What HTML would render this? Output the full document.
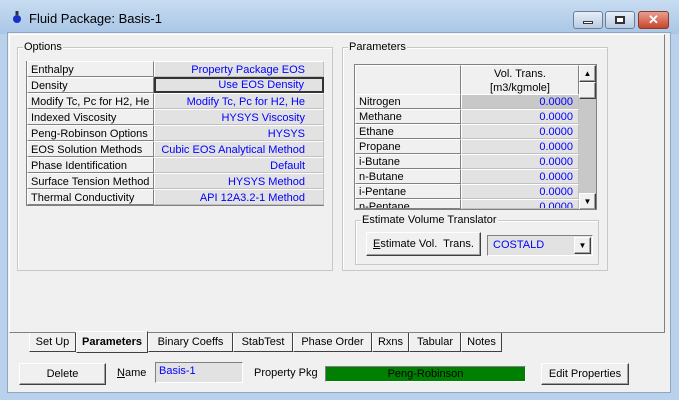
<!DOCTYPE html><html><head><style>
*{box-sizing:border-box;margin:0;padding:0}
body{width:679px;height:400px;position:relative;overflow:hidden;font-family:"Liberation Sans",sans-serif;font-size:11px;background:#b9d1ea}
.a{position:absolute}
.title{left:0;top:0;width:679px;height:34px;background:linear-gradient(#c7dcf1,#a9c6e6)}
.frame{left:7px;top:32px;width:664px;height:361px;background:#f0f0f0;border:1px solid #8ea6c4}
.grp{border:1px solid #c8c8c8;box-shadow:inset 1px 1px 0 #fff}
.lbl{background:#f0f0f0;padding:0 1px;color:#000}
.cell{position:absolute;height:16px;line-height:16px;border:1px solid #a0a0a0;padding:0 3px;white-space:nowrap;overflow:hidden}
.nm{background:#f0f0f0;border-color:#fff #808080 #808080 #fff}
.vl{background:#e2e2e2;color:#0000ff;text-align:right;padding-right:18px;border-color:#fff #c0c0c0 #c0c0c0 #fff}
.btn{position:absolute;background:#f0f0f0;border:1px solid;border-color:#fff #404040 #404040 #fff;box-shadow:inset -1px -1px 0 #a0a0a0;text-align:center}
.tab{position:absolute;top:333px;height:19px;background:#f0f0f0;border:1px solid;border-color:#fff #404040 #404040 #fff;border-top:none;text-align:center;line-height:18px}
.wb{position:absolute;top:11px;width:30px;height:18px;border:1px solid #6d7f97;border-radius:3px;background:linear-gradient(#e6eef8,#b9cbe3)}
</style></head><body>
<div class="a title"></div>
<div class="a" style="left:12px;top:10px;width:10px;height:12px"><svg width="10" height="13"><circle cx="5" cy="9" r="4" fill="#1a2fc8"/><rect x="3.5" y="1" width="3" height="4" fill="#333"/></svg></div>
<div class="a" style="left:29px;top:11px;font-size:13px">Fluid Package: Basis-1</div>
<div class="wb" style="left:573px"><div class="a" style="left:9px;top:9px;width:10px;height:3px;background:#fff;border:1px solid #333"></div></div>
<div class="wb" style="left:605px"><div class="a" style="left:9px;top:4px;width:10px;height:8px;border:2px solid #333;background:#fff"></div></div>
<div class="wb" style="left:638px;width:31px;border-color:#8a3a2a;background:linear-gradient(#e8a090,#c8442e);color:#fff;text-align:center;font-weight:bold;font-size:13px;line-height:15px">✕</div>
<div class="a frame"></div>
<div class="a" style="left:9px;top:34px;width:656px;height:299px;border:1px solid;border-color:#fff #808080 #808080 #fff"></div>
<div class="a grp" style="left:17px;top:47px;width:316px;height:224px"></div>
<div class="a lbl" style="left:23px;top:41px">Options</div>
<div class="a" style="left:26px;top:61px;width:298px;height:145px;border:1px solid #808080;background:#f0f0f0"></div>
<div class="cell nm" style="left:27px;top:61px;width:127px">Enthalpy</div><div class="cell vl" style="left:154px;top:61px;width:170px">Property Package EOS</div>
<div class="cell nm" style="left:27px;top:77px;width:127px">Density</div><div class="cell vl" style="left:154px;top:77px;width:170px;border:2px solid #333;line-height:13px">Use EOS Density</div>
<div class="cell nm" style="left:27px;top:93px;width:127px">Modify Tc, Pc for H2, He</div><div class="cell vl" style="left:154px;top:93px;width:170px">Modify Tc, Pc for H2, He</div>
<div class="cell nm" style="left:27px;top:109px;width:127px">Indexed Viscosity</div><div class="cell vl" style="left:154px;top:109px;width:170px">HYSYS Viscosity</div>
<div class="cell nm" style="left:27px;top:125px;width:127px">Peng-Robinson Options</div><div class="cell vl" style="left:154px;top:125px;width:170px">HYSYS</div>
<div class="cell nm" style="left:27px;top:141px;width:127px">EOS Solution Methods</div><div class="cell vl" style="left:154px;top:141px;width:170px">Cubic EOS Analytical Method</div>
<div class="cell nm" style="left:27px;top:157px;width:127px">Phase Identification</div><div class="cell vl" style="left:154px;top:157px;width:170px">Default</div>
<div class="cell nm" style="left:27px;top:173px;width:127px">Surface Tension Method</div><div class="cell vl" style="left:154px;top:173px;width:170px">HYSYS Method</div>
<div class="cell nm" style="left:27px;top:189px;width:127px">Thermal Conductivity</div><div class="cell vl" style="left:154px;top:189px;width:170px">API 12A3.2-1 Method</div>
<div class="a grp" style="left:342px;top:47px;width:266px;height:224px"></div>
<div class="a lbl" style="left:348px;top:41px">Parameters</div>
<div class="a" style="left:354px;top:64px;width:243px;height:146px;border:1px solid #808080;background:#f0f0f0;overflow:hidden">
<div class="cell nm" style="left:0;top:0;width:106px;height:30px"></div>
<div class="cell nm" style="left:106px;top:0;width:118px;height:30px;text-align:center;line-height:14px;padding-top:1px">Vol. Trans.<br>[m3/kgmole]</div>
<div class="a" style="left:224px;top:0;width:17px;height:145px;background:#c8c8c8"><div class="btn" style="left:0;top:0;width:17px;height:17px;font-size:8px;line-height:15px">▲</div><div class="btn" style="left:0;top:17px;width:17px;height:17px"></div><div class="btn" style="left:0;top:128px;width:17px;height:17px;font-size:8px;line-height:15px">▼</div></div>
</div>
<div id="rows"></div>
<div class="a grp" style="left:355px;top:220px;width:244px;height:45px"></div>
<div class="a lbl" style="left:361px;top:214px">Estimate Volume Translator</div>
<div class="btn" style="left:366px;top:232px;width:115px;height:24px;line-height:22px"><u>E</u>stimate Vol.&nbsp; Trans.</div>
<div class="a" style="left:487px;top:235px;width:106px;height:21px;border:1px solid;border-color:#808080 #fff #fff #808080;background:#e2e2e2;color:#00f;padding:3px 5px">COSTALD<div class="btn" style="left:86px;top:1px;width:17px;height:17px;color:#000;font-size:8px;line-height:15px">▼</div></div>
<div class="tab" style="left:29px;width:47px">Set Up</div>
<div class="tab" style="left:76px;width:72px;top:331px;height:22px;border-top:1px solid #fff;font-weight:bold;line-height:21px">Parameters</div>
<div class="tab" style="left:148px;width:85px">Binary Coeffs</div>
<div class="tab" style="left:233px;width:60px">StabTest</div>
<div class="tab" style="left:293px;width:79px">Phase Order</div>
<div class="tab" style="left:372px;width:37px">Rxns</div>
<div class="tab" style="left:409px;width:52px">Tabular</div>
<div class="tab" style="left:461px;width:41px">Notes</div>
<div class="btn" style="left:19px;top:363px;width:87px;height:22px;line-height:20px">Delete</div>
<div class="a" style="left:117px;top:367px"><u>N</u>ame</div>
<div class="a" style="left:155px;top:362px;width:88px;height:21px;border:1px solid;border-color:#808080 #fff #fff #808080;background:#e2e2e2;color:#00f;padding:2px 3px">Basis-1</div>
<div class="a" style="left:254px;top:367px">Property Pkg</div>
<div class="a" style="left:325px;top:366px;width:201px;height:16px;background:#008000;border:1px solid;border-color:#808080 #fff #fff #808080;text-align:center;line-height:14px">Peng-Robinson</div>
<div class="btn" style="left:541px;top:363px;width:88px;height:22px;line-height:20px">Edit Properties</div>
<script>
var n=["Nitrogen","Methane","Ethane","Propane","i-Butane","n-Butane","i-Pentane","n-Pentane"],h="";
for(var i=0;i<8;i++){var t=94+i*15,hh=i==7?10:15;
h+='<div class="cell nm" style="left:355px;top:'+t+'px;width:106px;height:'+hh+'px;line-height:15px">'+n[i]+'</div><div class="cell vl" style="left:461px;top:'+t+'px;width:118px;height:'+hh+'px;line-height:15px;padding-right:5px;'+(i==0?'background:#c8c8c8':'')+'">0.0000</div>';}
document.getElementById("rows").innerHTML=h;
</script>
</body></html>
